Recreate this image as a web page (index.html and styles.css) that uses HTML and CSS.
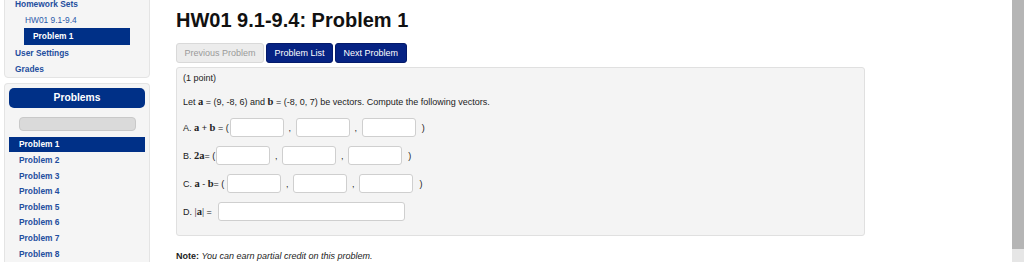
FILE: index.html
```html
<!DOCTYPE html>
<html>
<head>
<meta charset="utf-8">
<link rel="stylesheet" href="styles.css">
</head>
<body>
<aside class="sidebar">
  <nav class="navbox">
    <a class="nav-top">Homework Sets</a>
    <a class="nav-sub">HW01 9.1-9.4</a>
    <a class="nav-cur">Problem 1</a>
    <a class="nav-top">User Settings</a>
    <a class="nav-top">Grades</a>
  </nav>
  <div class="probbox">
    <div class="probhead">Problems</div>
    <div class="progress"></div>
    <ul class="plist">
      <li class="cur">Problem 1</li>
      <li>Problem 2</li>
      <li>Problem 3</li>
      <li>Problem 4</li>
      <li>Problem 5</li>
      <li>Problem 6</li>
      <li>Problem 7</li>
      <li>Problem 8</li>
    </ul>
  </div>
</aside>
<main class="main">
  <h1 class="title">HW01 9.1-9.4: Problem 1</h1>
  <div class="btns">
    <span class="btn btn-off">Previous Problem</span>
    <span class="btn">Problem List</span>
    <span class="btn">Next Problem</span>
  </div>
  <div class="problem">
    <p class="line first">(1 point)</p>
    <p class="line">Let <b class="m">a</b> = (9, -8, 6) and <b class="m">b</b> = (-8, 0, 7) be vectors. Compute the following vectors.</p>
    <div class="row">
      <span class="lbl">A. <b class="m">a</b> + <b class="m">b</b> = (</span>
      <span class="inp"></span><span class="sep">,</span><span class="inp"></span><span class="sep">,</span><span class="inp"></span>
      <span class="close">)</span>
    </div>
    <div class="row">
      <span class="lbl">B. <b class="m">2a</b>= (</span>
      <span class="inp"></span><span class="sep">,</span><span class="inp"></span><span class="sep">,</span><span class="inp"></span>
      <span class="close">)</span>
    </div>
    <div class="row">
      <span class="lbl lbl-c">C. <b class="m">a</b> - <b class="m">b</b>= (</span>
      <span class="inp"></span><span class="sep">,</span><span class="inp"></span><span class="sep">,</span><span class="inp"></span>
      <span class="close">)</span>
    </div>
    <div class="row">
      <span class="lbl lbl-d">D. <span class="mr">|</span><b class="m">a</b><span class="mr">|</span> = </span>
      <span class="inp wide"></span>
    </div>
  </div>
  <p class="note"><b>Note:</b> <i>You can earn partial credit on this problem.</i></p>
</main>
<div class="scrollbar"><div class="thumb"></div></div>
</body>
</html>
```
FILE: styles.css
```css
* { box-sizing: border-box; }
html, body { margin: 0; padding: 0; }
body {
  display: flex;
  align-items: flex-start;
  height: 262px;
  overflow: hidden;
  background: #fff;
  font-family: "Liberation Sans", Arial, sans-serif;
  color: #222;
}
.sidebar {
  flex: none;
  width: 146px;
  margin-left: 4px;
}
.navbox {
  display: flex;
  flex-direction: column;
  margin-top: -8px;
  padding: 3px 0 0 0;
  background: #f5f5f5;
  border: 1px solid #e4e4e4;
  border-radius: 4px;
}
.navbox a {
  display: block;
  height: 16px;
  line-height: 16px;
  font-size: 8.4px;
  color: #1f4e9e;
  text-decoration: none;
}
.nav-top { padding-left: 10px; font-weight: bold; }
.nav-sub { padding-left: 20px; color: #2a5aaa !important; }
.nav-cur {
  margin-left: 19px;
  width: 106px;
  height: 17px !important;
  line-height: 17px !important;
  padding-left: 9px;
  background: #003087;
  color: #fff !important;
  font-weight: bold;
}
.probbox {
  margin-top: 5px;
  padding: 4px 4px 0 4px;
  height: 179px;
  overflow: hidden;
  background: #f5f5f5;
  border: 1px solid #e4e4e4;
  border-bottom: none;
  border-radius: 4px 4px 0 0;
}
.probhead {
  height: 20px;
  line-height: 20px;
  background: #003087;
  color: #fff;
  border-radius: 5px;
  text-align: center;
  font-weight: bold;
  font-size: 10.3px;
}
.progress {
  margin: 9px 9px 0 10px;
  height: 14px;
  background: #dadada;
  border: 1px solid #c9c9c9;
  border-radius: 4px;
}
.plist {
  list-style: none;
  margin: 6px 0 0 0;
  padding: 0;
}
.plist li {
  height: 15.6px;
  line-height: 15.6px;
  padding-left: 10px;
  font-size: 8.4px;
  font-weight: bold;
  color: #1f4e9e;
}
.plist li.cur {
  height: 15px;
  line-height: 15px;
  margin-bottom: 1px;
  background: #003087;
  color: #fff;
}
.main {
  flex: none;
  width: 689px;
  margin-left: 26px;
}
.title {
  margin: 8px 0 0 0;
  font-size: 20px;
  line-height: 24px;
  font-weight: bold;
  color: #111;
}
.btns {
  display: flex;
  gap: 2px;
  margin-top: 11px;
}
.btn {
  height: 20px;
  line-height: 18px;
  padding: 0 7.5px;
  font-size: 9px;
  color: #fff;
  background: #062383;
  border: 1px solid #041a6a;
  border-radius: 3px;
}
.btn-off {
  background: #ececec;
  border-color: #d9d9d9;
  color: #9a9a9a;
}
.problem {
  margin-top: 4px;
  padding: 4px 6px 14px 6px;
  background: #f4f4f4;
  border: 1px solid #e0e0e0;
  border-radius: 3px;
  font-size: 9px;
  color: #222;
}
.line {
  margin: 12px 0 0 0;
  line-height: 12px;
}
.line.first { margin-top: 0; }
.m {
  font-family: "Liberation Serif", "Times New Roman", serif;
  font-weight: bold;
  font-size: 10.5px;
}
.mr {
  font-family: "Liberation Serif", "Times New Roman", serif;
  font-size: 10.5px;
}
.row {
  display: flex;
  align-items: center;
  height: 19px;
  margin-top: 9px;
  white-space: pre;
}
.problem .line + .row { margin-top: 10px; }
.lbl { margin-right: 1px; }
.lbl-c { margin-right: 3px; }
.lbl-d { margin-right: 4px; }
.inp {
  display: block;
  width: 54px;
  height: 19px;
  background: #fff;
  border: 1px solid #cfcfcf;
  border-radius: 3px;
}
.inp.wide { width: 187px; }
.sep {
  width: 12px;
  text-align: center;
}
.close { margin-left: 6px; }
.note {
  margin: 14px 0 0 0;
  font-size: 9px;
  line-height: 12px;
  color: #222;
}
.scrollbar {
  flex: none;
  margin-left: auto;
  width: 12px;
  height: 262px;
  background: #e6e6e6;
}
.thumb {
  height: 249px;
  background: #b5b5b5;
}
```
